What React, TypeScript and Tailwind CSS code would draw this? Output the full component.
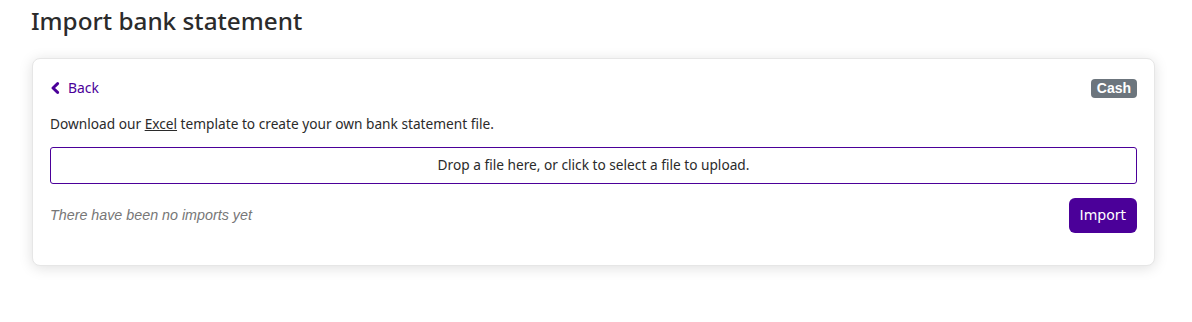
import React from 'react';

const App: React.FC = () => {
  return (
    <div className="min-h-[322px] bg-white pl-8 pr-[37px] pt-[3px]" style={{ fontFamily: '"Noto Sans", "Liberation Sans", sans-serif' }}>
      <h1 className="text-[24.3px] leading-[36px] font-medium text-[#2b2b2b] -ml-px">Import bank statement</h1>

      <div className="mt-[19px] rounded-lg bg-white border border-[#e6e6e6] shadow-[0_2px_14px_rgba(0,0,0,0.13)] px-[17px] pt-[19px] pb-[32px]">
        <div className="flex items-center justify-between h-[20px]">
          <button className="flex items-center gap-[8px] text-[#4b0099] text-[13.9px] leading-5">
            <svg width="10" height="12" viewBox="0 0 10 12" fill="none">
              <path d="M7.6 1.6 L3 6 L7.6 10.4" stroke="#4b0099" strokeWidth="2.9" strokeLinecap="round" strokeLinejoin="round" />
            </svg>
            <span>Back</span>
          </button>
          <span
            className="rounded-[4px] bg-[#6c757d] px-[6px] h-[19px] flex items-center text-white text-[14px] font-bold"
            style={{ fontFamily: '"Liberation Sans", Arial, sans-serif' }}
          >
            Cash
          </span>
        </div>

        <p className="mt-[16px] text-[13.7px] leading-5 text-[#2b2b2b]">
          Download our <a className="underline">Excel</a> template to create your own bank statement file.
        </p>

        <div className="mt-[13px] h-[37px] rounded-[3px] border border-[#4b0099] flex items-center justify-center text-[13.7px] text-[#2b2b2b]">
          Drop a file here, or click to select a file to upload.
        </div>

        <div className="mt-[14px] flex items-center justify-between">
          <p className="italic text-[14.3px] text-[#777777]" style={{ fontFamily: '"Liberation Sans", Arial, sans-serif' }}>
            There have been no imports yet
          </p>
          <button className="h-[35px] px-[11px] rounded-[6px] bg-[#4b0099] text-white text-[14px]" style={{ fontFamily: '"DejaVu Sans", sans-serif' }}>
            Import
          </button>
        </div>
      </div>
    </div>
  );
};

export default App;
